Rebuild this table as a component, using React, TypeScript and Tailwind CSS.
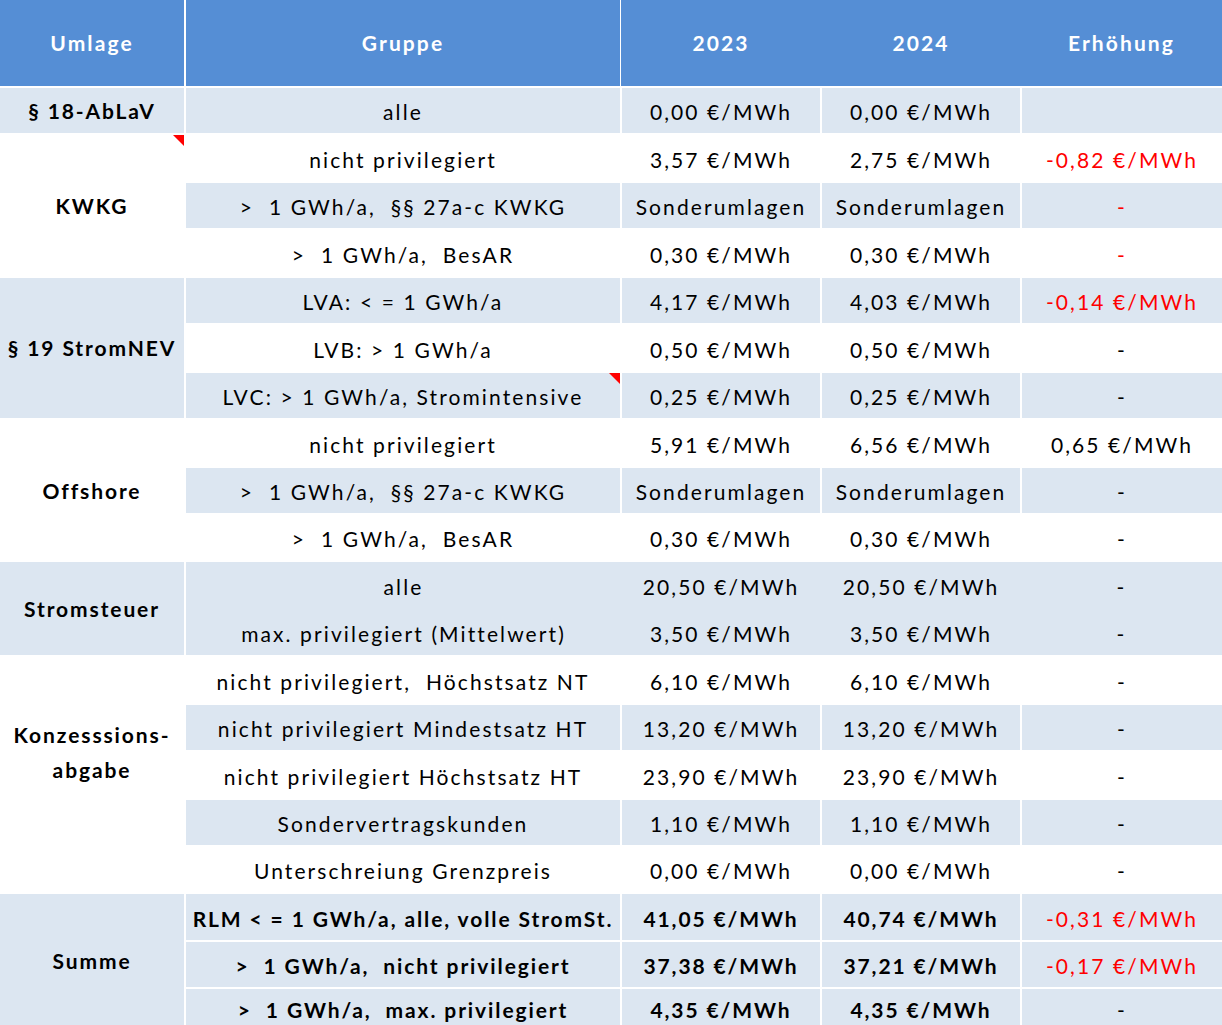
import React from 'react';

type Row = {
    gruppe: string;
    v23: string;
    v24: string;
    diff: string;
    light: boolean;
    bold?: boolean;
    red?: boolean;
    note?: boolean;
};

const HEAD = 'bg-[#558ED5]';
const LIGHT = 'bg-[#DCE6F1]';

// Spalte "Umlage": verbundene Zellen, Position im Grid fest vorgegeben
const groups = [
    { label: ['§ 18-AbLaV'], cls: 'col-start-1 row-start-2 row-span-1', light: true },
    { label: ['KWKG'], cls: 'col-start-1 row-start-3 row-span-3', light: false, note: true },
    { label: ['§ 19 StromNEV'], cls: 'col-start-1 row-start-6 row-span-3', light: true },
    { label: ['Offshore'], cls: 'col-start-1 row-start-9 row-span-3', light: false },
    { label: ['Stromsteuer'], cls: 'col-start-1 row-start-12 row-span-2', light: true },
    { label: ['Konzesssions-', 'abgabe'], cls: 'col-start-1 row-start-14 row-span-5 pb-[46px]', light: false },
    { label: ['Summe'], cls: 'col-start-1 row-start-19 row-span-3', light: true },
];

const rows: Row[] = [
    { gruppe: 'alle', v23: '0,00 €/MWh', v24: '0,00 €/MWh', diff: '', light: true },
    { gruppe: 'nicht privilegiert', v23: '3,57 €/MWh', v24: '2,75 €/MWh', diff: '-0,82 €/MWh', light: false, red: true },
    { gruppe: '>  1 GWh/a,  §§ 27a-c KWKG', v23: 'Sonderumlagen', v24: 'Sonderumlagen', diff: '-', light: true, red: true },
    { gruppe: '>  1 GWh/a,  BesAR', v23: '0,30 €/MWh', v24: '0,30 €/MWh', diff: '-', light: false, red: true },
    { gruppe: 'LVA: < = 1 GWh/a', v23: '4,17 €/MWh', v24: '4,03 €/MWh', diff: '-0,14 €/MWh', light: true, red: true },
    { gruppe: 'LVB: > 1 GWh/a', v23: '0,50 €/MWh', v24: '0,50 €/MWh', diff: '-', light: false },
    { gruppe: 'LVC: > 1 GWh/a, Stromintensive', v23: '0,25 €/MWh', v24: '0,25 €/MWh', diff: '-', light: true, note: true },
    { gruppe: 'nicht privilegiert', v23: '5,91 €/MWh', v24: '6,56 €/MWh', diff: '0,65 €/MWh', light: false },
    { gruppe: '>  1 GWh/a,  §§ 27a-c KWKG', v23: 'Sonderumlagen', v24: 'Sonderumlagen', diff: '-', light: true },
    { gruppe: '>  1 GWh/a,  BesAR', v23: '0,30 €/MWh', v24: '0,30 €/MWh', diff: '-', light: false },
];

const stromsteuer = [
    { gruppe: 'alle', v23: '20,50 €/MWh', v24: '20,50 €/MWh', diff: '-' },
    { gruppe: 'max. privilegiert (Mittelwert)', v23: '3,50 €/MWh', v24: '3,50 €/MWh', diff: '-' },
];

const rest: Row[] = [
    { gruppe: 'nicht privilegiert,  Höchstsatz NT', v23: '6,10 €/MWh', v24: '6,10 €/MWh', diff: '-', light: false },
    { gruppe: 'nicht privilegiert Mindestsatz HT', v23: '13,20 €/MWh', v24: '13,20 €/MWh', diff: '-', light: true },
    { gruppe: 'nicht privilegiert Höchstsatz HT', v23: '23,90 €/MWh', v24: '23,90 €/MWh', diff: '-', light: false },
    { gruppe: 'Sondervertragskunden', v23: '1,10 €/MWh', v24: '1,10 €/MWh', diff: '-', light: true },
    { gruppe: 'Unterschreiung Grenzpreis', v23: '0,00 €/MWh', v24: '0,00 €/MWh', diff: '-', light: false },
    { gruppe: 'RLM < = 1 GWh/a, alle, volle StromSt.', v23: '41,05 €/MWh', v24: '40,74 €/MWh', diff: '-0,31 €/MWh', light: true, bold: true, red: true },
    { gruppe: '>  1 GWh/a,  nicht privilegiert', v23: '37,38 €/MWh', v24: '37,21 €/MWh', diff: '-0,17 €/MWh', light: true, bold: true, red: true },
    { gruppe: '>  1 GWh/a,  max. privilegiert', v23: '4,35 €/MWh', v24: '4,35 €/MWh', diff: '-', light: true, bold: true },
];

function NoteMark() {
    return (
        <svg className="absolute top-0 right-0" width="11" height="11" viewBox="0 0 11 11">
            <polygon points="0,0 11,0 11,11" fill="#ff0000" />
        </svg>
    );
}

function DataRow({ r }: { r: Row }) {
    const bg = r.light ? LIGHT : 'bg-white';
    const weight = r.bold ? 'font-bold tracking-[0.09em]' : '';
    return (
        <>
            <div className={`relative flex items-center justify-center whitespace-pre pt-[3px] ${bg} ${weight}`}>
                {r.gruppe}
                {r.note && <NoteMark />}
            </div>
            <div className={`flex items-center justify-center pt-[3px] ${bg} ${weight}`}>{r.v23}</div>
            <div className={`flex items-center justify-center pt-[3px] ${bg} ${weight}`}>{r.v24}</div>
            <div className={`flex items-center justify-center pt-[3px] ${bg} ${r.red ? 'text-[#ff0000]' : ''}`}>{r.diff}</div>
        </>
    );
}

export default function App() {
    return (
        <div className="w-[1222px] h-[1025px] overflow-hidden bg-white font-['Lato',sans-serif] text-[21px] tracking-[0.1em] text-black">
            <div className="grid grid-cols-[184px_434px_198px_198px_1fr] grid-rows-[86px_repeat(19,45.44px)_37px] gap-[2px] bg-white">
                {/* Kopfzeile */}
                <div className={`flex items-center justify-center font-bold text-white ${HEAD}`}>Umlage</div>
                <div className={`flex items-center justify-center font-bold text-white ${HEAD}`}>Gruppe</div>
                <div className={`col-span-3 -ml-[1px] grid grid-cols-[200px_200px_1fr] items-center text-center font-bold text-white ${HEAD}`}>
                    <span>2023</span>
                    <span>2024</span>
                    <span>Erhöhung</span>
                </div>

                {groups.map((g) => (
                    <div
                        key={g.label[0]}
                        className={`relative flex flex-col items-center justify-center font-bold leading-[35px] tracking-[0.09em] ${g.cls} ${g.light ? LIGHT : 'bg-white'}`}
                    >
                        {g.label.map((l) => (
                            <span key={l}>{l}</span>
                        ))}
                        {g.note && <NoteMark />}
                    </div>
                ))}

                {rows.map((r, i) => (
                    <DataRow key={'a' + i} r={r} />
                ))}

                {/* Stromsteuer: durchgehender Block ohne Linien */}
                <div className={`col-start-2 col-span-4 row-start-12 row-span-2 grid grid-cols-[435px_200px_200px_1fr] grid-rows-2 ${LIGHT}`}>
                    {stromsteuer.map((s) => (
                        <React.Fragment key={s.gruppe}>
                            <div className="flex items-center justify-center pt-[3px]">{s.gruppe}</div>
                            <div className="flex items-center justify-center pt-[3px]">{s.v23}</div>
                            <div className="flex items-center justify-center pt-[3px]">{s.v24}</div>
                            <div className="flex items-center justify-center pt-[3px]">{s.diff}</div>
                        </React.Fragment>
                    ))}
                </div>

                {rest.map((r, i) => (
                    <DataRow key={'b' + i} r={r} />
                ))}
            </div>
        </div>
    );
}
